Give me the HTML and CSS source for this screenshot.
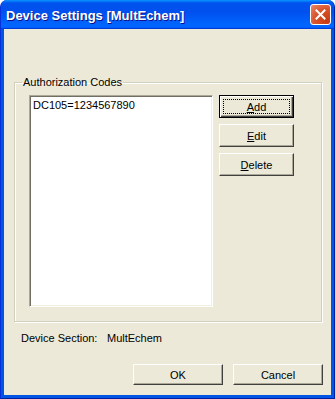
FILE: index.html
```html
<!DOCTYPE html>
<html lang="en">
<head>
    <meta charset="UTF-8">
    <title>Device Settings [MultEchem]</title>
    <link rel="stylesheet" href="styles.css">
</head>
<body>
    <div class="window">
        <div class="titlebar">
            <span class="title">Device Settings [MultEchem]</span>
            <button class="close-button" aria-label="Close">
                <svg width="11" height="11" viewBox="0 0 11 11">
                    <path d="M1.5 1.5 L9.5 9.5 M9.5 1.5 L1.5 9.5" stroke="#fff" stroke-width="2" stroke-linecap="square"/>
                </svg>
            </button>
        </div>

        <div class="client">
            <fieldset class="group">
                <legend>Authorization Codes</legend>
                <div class="group-body">
                    <div class="listbox">
                        <div class="list-item">DC105=1234567890</div>
                    </div>
                    <div class="side-buttons">
                        <button class="button default-button"><span class="focus-ring"><u>A</u>dd</span></button>
                        <button class="button"><u>E</u>dit</button>
                        <button class="button"><u>D</u>elete</button>
                    </div>
                </div>
            </fieldset>

            <div class="section-row">
                <span class="section-label">Device Section:</span>
                <span class="section-value">MultEchem</span>
            </div>

            <div class="footer">
                <button class="button wide-button">OK</button>
                <button class="button wide-button">Cancel</button>
            </div>
        </div>
    </div>
</body>
</html>
```

FILE: styles.css
```css
body {
    margin: 0;
    background-color: #ffffff;
    font-family: "Liberation Sans", Arial, sans-serif;
    font-size: 11px;
}

.window {
    width: 335px;
    height: 399px;
    display: flex;
    flex-direction: column;
    background-color: #0055e5;
    border-radius: 7px 7px 0 0;
    box-sizing: border-box;
    border-left: 1px solid #0831d9;
    border-right: 1px solid #001ea0;
    border-bottom: 1px solid #001ea0;
    overflow: hidden;
}

.titlebar {
    height: 29px;
    flex-shrink: 0;
    display: flex;
    align-items: center;
    justify-content: space-between;
    padding: 0 4px 0 6px;
    margin: 0 -1px;
    background: linear-gradient(to bottom, #0997ff 0%, #0053ee 10%, #0050ee 40%, #0066ff 86%, #0066ff 92%, #005bff 95%, #003dd7 97%, #003dd7 100%);
}

.title {
    color: #ffffff;
    font-weight: bold;
    font-size: 13px;
    text-shadow: 1px 1px #0f1089;
    padding-top: 1px;
}

.close-button {
    width: 21px;
    height: 21px;
    padding: 0;
    display: flex;
    align-items: center;
    justify-content: center;
    border: 1px solid #ffffff;
    border-radius: 3px;
    background: radial-gradient(circle at 85% 85%, #c63a12 0%, #d9542c 55%, #e8896a 100%);
    margin-top: -1px;
}

.client {
    flex: 1;
    margin: 0 3px 3px;
    background-color: #ece9d8;
    display: flex;
    flex-direction: column;
}

.group {
    margin: 47px 9px 0 10px;
    padding: 6px 27px 0 14px;
    border: 1px solid #d0d0bf;
    box-shadow: 1px 1px 0 #ffffff, inset 1px 1px 0 #ffffff;
    height: 246px;
    box-sizing: border-box;
}

.group legend {
    padding: 0 1px;
    margin-left: -7px;
    line-height: 13px;
    color: #000000;
}

.group-body {
    display: flex;
    gap: 6px;
    height: 212px;
}

.listbox {
    flex: 1;
    background-color: #ffffff;
    border: 1px solid;
    border-color: #aca899 #ffffff #ffffff #aca899;
    box-shadow: inset 1px 1px 0 #716f64, inset -1px -1px 0 #f1efe2;
    padding: 3px 3px;
}

.list-item {
    line-height: 13px;
}

.side-buttons {
    display: flex;
    flex-direction: column;
    gap: 6px;
}

.button {
    width: 75px;
    height: 23px;
    padding: 0;
    font-family: "Liberation Sans", Arial, sans-serif;
    font-size: 11px;
    color: #000000;
    background-color: #ece9d8;
    border: 1px solid;
    border-color: #ffffff #404040 #404040 #ffffff;
    box-shadow: inset -1px -1px 0 #aca899;
    display: flex;
    align-items: center;
    justify-content: center;
}

.default-button {
    border: 1px solid #000000;
    box-shadow: inset 1px 1px 0 #ffffff, inset -1px -1px 0 #404040, inset -2px -2px 0 #aca899;
    padding: 3px;
}

.focus-ring {
    flex: 1;
    align-self: stretch;
    display: flex;
    align-items: center;
    justify-content: center;
    border: 1px dotted #000000;
}

.section-row {
    display: flex;
    margin: 10px 0 0 17px;
    line-height: 13px;
}

.section-label {
    width: 86px;
}

.footer {
    display: flex;
    justify-content: flex-end;
    gap: 10px;
    margin: 19px 8px 0 0;
}

.wide-button {
    width: 90px;
    height: 21px;
}
```
